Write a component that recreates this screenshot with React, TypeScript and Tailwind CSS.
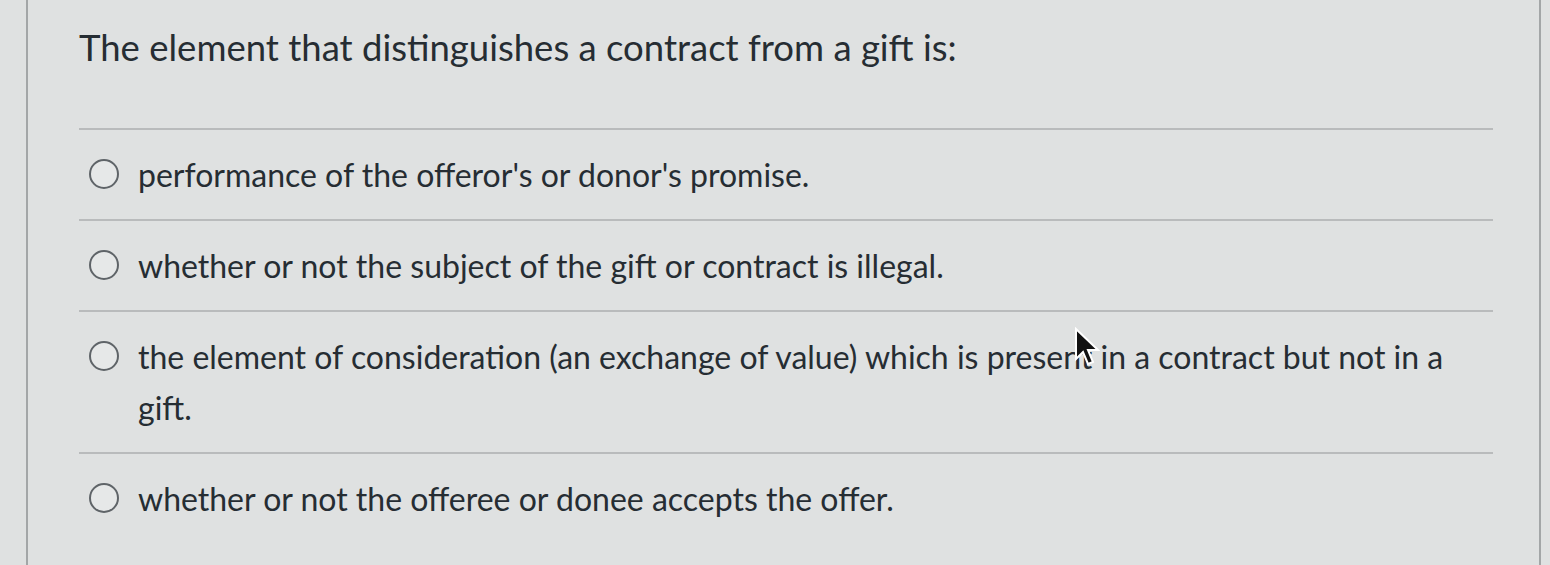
const OPTIONS = [
  "performance of the offeror's or donor's promise.",
  "whether or not the subject of the gift or contract is illegal.",
  "the element of consideration (an exchange of value) which is present in a contract but not in a gift.",
  "whether or not the offeree or donee accepts the offer.",
]

export default function App() {
  return (
    <div
      className="relative h-[565px] w-[1550px] overflow-hidden bg-[#dfe1e1] text-[#262d33]"
      style={{ fontFamily: 'Lato, "Open Sans", sans-serif' }}
    >
      <div className="ml-[26px] mr-[9px] flex h-full border-x-2 border-[#a3a6a7]">
        <div className="flex-1 pl-[51px] pr-[46px]">
          <h2 className="pt-[24px] pb-[58px] text-[36.5px] leading-[46px] font-normal">
            The element that distinguishes a contract from a gift is:
          </h2>
          <ul>
            {OPTIONS.map((opt) => (
              <li key={opt} className="border-t-2 border-[#b9bbbc] pt-[19px] pb-[19px]">
                <label className="flex items-start gap-[19px] pl-[10px]">
                  <span className="mt-[10px] h-[30px] w-[30px] shrink-0 rounded-full border-2 border-[#5f6468] bg-[#e6e8e8]" />
                  <span className="text-[32px] leading-[51px]">{opt}</span>
                </label>
              </li>
            ))}
          </ul>
        </div>
      </div>
      <svg
        className="absolute left-[1074px] top-[327px]"
        width="26"
        height="40"
        viewBox="0 0 13 20"
      >
        <path d="M1 1 L1 16 L4.5 12.5 L7 18.5 L9.5 17.5 L7 11.5 L12 11.5 Z" fill="#111" stroke="#fff" strokeWidth="1" />
      </svg>
    </div>
  )
}
